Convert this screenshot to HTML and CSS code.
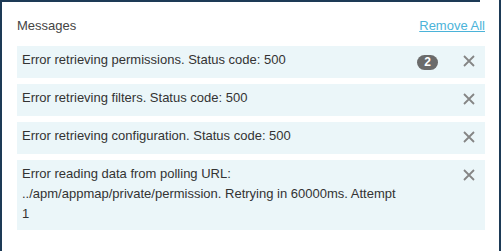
FILE: index.html
```html
<!DOCTYPE html>
<html>
<head>
<meta charset="utf-8">
<link rel="stylesheet" href="styles.css">
</head>
<body>
<div class="panel">
  <div class="header">
    <span class="title">Messages</span>
    <a class="remove-all" href="#">Remove All</a>
  </div>
  <div class="list">
    <div class="msg">
      <div class="text">Error retrieving permissions. Status code: 500</div>
      <span class="badge">2</span>
      <button class="close" aria-label="Close"><svg width="12" height="12" viewBox="0 0 12 12"><path d="M1 1L11 11M11 1L1 11" stroke="#858585" stroke-width="1.8" fill="none"/></svg></button>
    </div>
    <div class="msg">
      <div class="text">Error retrieving filters. Status code: 500</div>
      <button class="close" aria-label="Close"><svg width="12" height="12" viewBox="0 0 12 12"><path d="M1 1L11 11M11 1L1 11" stroke="#858585" stroke-width="1.8" fill="none"/></svg></button>
    </div>
    <div class="msg">
      <div class="text">Error retrieving configuration. Status code: 500</div>
      <button class="close" aria-label="Close"><svg width="12" height="12" viewBox="0 0 12 12"><path d="M1 1L11 11M11 1L1 11" stroke="#858585" stroke-width="1.8" fill="none"/></svg></button>
    </div>
    <div class="msg">
      <div class="text">Error reading data from polling URL: ../apm/appmap/private/permission. Retrying in 60000ms. Attempt 1</div>
      <button class="close" aria-label="Close"><svg width="12" height="12" viewBox="0 0 12 12"><path d="M1 1L11 11M11 1L1 11" stroke="#858585" stroke-width="1.8" fill="none"/></svg></button>
    </div>
  </div>
</div>
</body>
</html>
```

FILE: styles.css
```css
html, body {
  margin: 0;
  padding: 0;
  background: #ffffff;
  overflow: hidden;
}

body {
  font-family: "Liberation Sans", Arial, sans-serif;
  font-size: 13px;
  color: #333333;
}

.panel {
  position: relative;
  box-sizing: border-box;
  width: 501px;
  min-height: 251px;
  border-top: 2px solid #1d3a56;
  border-left: 2px solid #1d3a56;
  border-right: 2px solid #1d3a56;
  padding: 14px 14px 0 15px;
}

.panel::after {
  content: "";
  position: absolute;
  top: -2px;
  right: 0;
  width: 19px;
  height: 2px;
  background: #ffffff;
}

.header {
  display: flex;
  justify-content: space-between;
  align-items: center;
  line-height: 20px;
  margin-bottom: 10px;
}

.title {
  color: #444444;
}

.remove-all {
  color: #4bb3d9;
  text-decoration: underline;
}

.list {
  display: flex;
  flex-direction: column;
  gap: 6px;
}

.msg {
  display: flex;
  align-items: flex-start;
  background: #ebf6f9;
  padding: 4px 5px 6px 5px;
  line-height: 20px;
}

.text {
  flex: 1;
  padding-right: 55px;
}

.badge {
  box-sizing: border-box;
  width: 21px;
  height: 15px;
  margin-top: 5px;
  margin-right: 20px;
  margin-left: -35px;
  border-radius: 8px;
  background: #6b6b6b;
  color: #ffffff;
  font-weight: bold;
  font-size: 12px;
  line-height: 15px;
  text-align: center;
}

.close {
  display: flex;
  align-items: center;
  justify-content: center;
  width: 22px;
  height: 22px;
  padding: 0;
  margin: 0;
  border: 0;
  background: transparent;
}
```
